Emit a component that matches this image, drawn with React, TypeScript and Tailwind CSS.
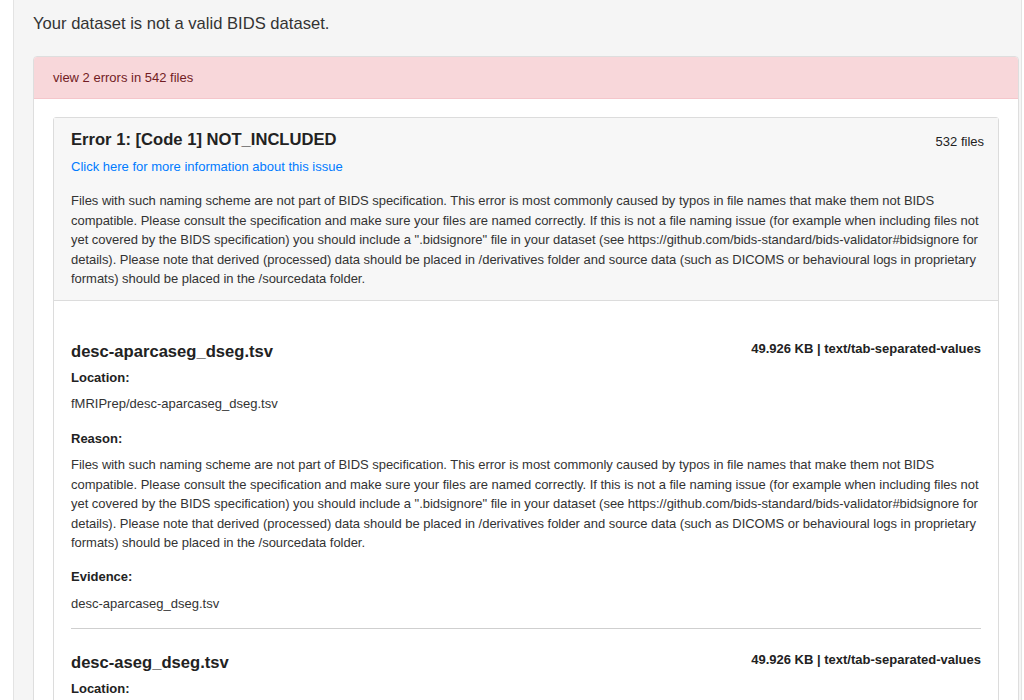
import React from "react";

const para =
  'Files with such naming scheme are not part of BIDS specification. This error is most commonly caused by typos in file names that make them not BIDS compatible. Please consult the specification and make sure your files are named correctly. If this is not a file naming issue (for example when including files not yet covered by the BIDS specification) you should include a ".bidsignore" file in your dataset (see https://github.com/bids-standard/bids-validator#bidsignore for details). Please note that derived (processed) data should be placed in /derivatives folder and source data (such as DICOMS or behavioural logs in proprietary formats) should be placed in the /sourcedata folder.';

function FileEntry({ name, first, evidence }: { name: string; first?: boolean; evidence: string }) {
  return (
    <div className={first ? "pt-[38px]" : "pt-[21px]"}>
      <div className="flex items-start justify-between">
        <h4 className="mt-[2px] text-[16.6px] leading-[22px] font-bold text-[#222]">{name}</h4>
        <span className="text-[13px] leading-[20px] font-bold text-[#222]">
          49.926 KB | text/tab-separated-values
        </span>
      </div>
      <div className="mt-[5.5px] text-[13px] leading-[19.5px] font-bold text-[#222]">Location:</div>
      <div className="mt-[6.5px] text-[13px] leading-[19.5px]">fMRIPrep/{evidence}</div>
      <div className="mt-[15.5px] text-[13px] leading-[19.5px] font-bold text-[#222]">Reason:</div>
      <p className="mt-[6.5px] text-[13px] leading-[19.5px] tracking-[-0.03px]">{para}</p>
      <div className="mt-[14.5px] text-[13px] leading-[19.5px] font-bold text-[#222]">Evidence:</div>
      <div className="mt-[7.5px] text-[13px] leading-[19.5px]">{evidence}</div>
      <hr className="mt-[14px] border-0 border-t border-[#cfcfcf]" />
    </div>
  );
}

export default function App() {
  return (
    <div
      className="h-[700px] w-[1024px] overflow-hidden bg-white text-[#333]"
      style={{ fontFamily: '"Liberation Sans", Arial, sans-serif' }}
    >
      <div className="ml-[13px] h-[760px] w-[1009px] border-x border-[#e3e3e3] bg-[#f5f5f5] pl-[19px] pr-[2px]">
        <h3 className="pt-[13px] text-[16.6px] leading-[22px] text-[#333]">
          Your dataset is not a valid BIDS dataset.
        </h3>
        <div className="mt-[21px] rounded-[4px] border border-[#dedede] bg-white">
          <div className="rounded-t-[3px] border-b border-[#f5c6cb] bg-[#f8d7da] px-[19px] py-[10px] text-[13px] leading-[21px] text-[#721c24]">
            view 2 errors in 542 files
          </div>
          <div className="px-[19px] pt-[18px]">
            <div className="rounded-[3px] border border-[#dcdcdc]">
              <div className="border-b border-[#dcdcdc] bg-[#f7f7f7] px-[17px] pt-[11px] pb-[11px]">
                <div className="flex items-start justify-between">
                  <h4 className="text-[16.6px] leading-[22px] font-bold text-[#222]">
                    Error 1: [Code 1] NOT_INCLUDED
                  </h4>
                  <span className="mt-[3px] mr-[-3px] text-[13px] leading-[20px] text-[#222]">532 files</span>
                </div>
                <a className="mt-[4px] block text-[13px] leading-[21px] text-[#007bff]" href="#">
                  Click here for more information about this issue
                </a>
                <p className="mt-[14px] text-[13px] leading-[19.5px] tracking-[-0.03px]">{para}</p>
              </div>
              <div className="px-[17px]">
                <FileEntry first name="desc-aparcaseg_dseg.tsv" evidence="desc-aparcaseg_dseg.tsv" />
                <FileEntry name="desc-aseg_dseg.tsv" evidence="desc-aseg_dseg.tsv" />
              </div>
            </div>
          </div>
        </div>
      </div>
    </div>
  );
}
